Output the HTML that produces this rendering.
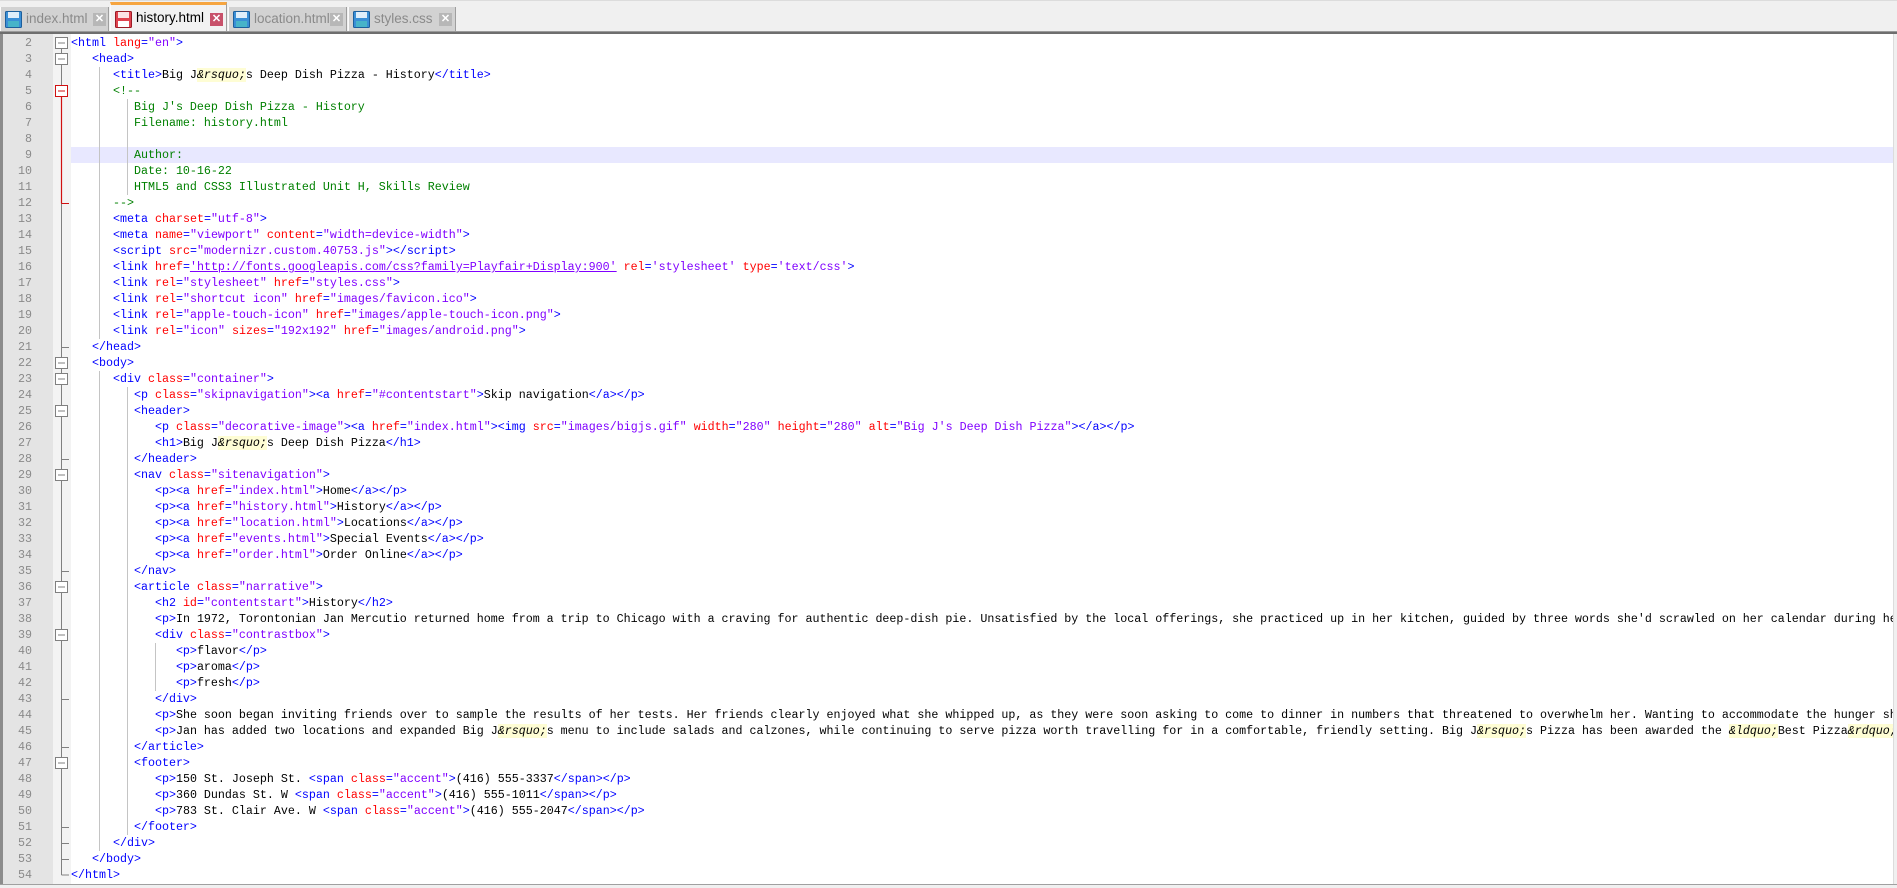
<!DOCTYPE html>
<html><head><meta charset="utf-8"><style>
*{margin:0;padding:0;box-sizing:border-box}
body{width:1897px;height:888px;overflow:hidden;background:#fff;position:relative;font-family:"Liberation Sans",sans-serif}
#bar{position:absolute;left:0;top:0;width:1897px;height:32px;background:#f0f0f0;border-top:1px solid #dcdcdc}
#barline{position:absolute;left:0;top:31px;width:1897px;height:3px;background:#6e6e6e;border-top:1px solid #9a9a9a}
.tab{position:absolute;top:7px;height:25px;background:#d2d2d2;border-right:1px solid #9e9e9e;border-left:1px solid #fafafa;font-size:13.5px;color:#8a8a8a;line-height:24px;white-space:nowrap}
.tab.act{top:2px;height:30px;background:#f2f2f2;border-top:3px solid #f6a540;color:#000;line-height:26px}
.tab svg{position:absolute;left:4px;top:4px}
.tab.act svg.f{top:6px}
.tab .nm{position:absolute;left:25px;top:0}
.tab .x{position:absolute;top:6px;width:13px;height:13px;background:#b7b7b7;color:#fff;font-size:11px;line-height:13px;text-align:center;font-weight:bold}
.tab.act .x{background:#c8516a;top:8px}
#gut{position:absolute;left:0;top:34px;width:53px;height:850px;background:#e4e4e4;border-left:3px solid #8c8c8c}
#fold{position:absolute;left:53px;top:34px;width:18px;height:850px;background:#f3f3f3}
#bot{position:absolute;left:0;top:884px;width:1897px;height:4px;background:#f0f0f0;border-top:1px solid #a0a0a0}
#nums{position:absolute;left:0;top:35px;width:32px;text-align:right;font-family:"Liberation Mono",monospace;font-size:11.67px;line-height:16px;color:#8a8a8a}
#code{position:absolute;left:71px;top:35px;width:1822px;font-family:"Liberation Mono",monospace;font-size:11.67px;line-height:16px;color:#000;overflow:hidden}
.l{height:16px;overflow:hidden;white-space:pre}
.hl{background:#e8e8ff}
.i{display:inline-block;height:16px;vertical-align:top;white-space:pre;background:repeating-linear-gradient(90deg,#c4c4c4 0 1px,transparent 1px 28px) no-repeat 28px 0}
.t{color:#0000ff}.a{color:#ff0000}.v{color:#8000ff}.c{color:#008000}
.e{font-style:italic;background:#fefdd4}
.u{text-decoration:underline}
#rb{position:absolute;left:1893px;top:34px;width:4px;height:850px;background:#f0f0f0;border-left:1px solid #dcdcdc}
</style></head><body>
<div id="bar"></div>
<div class="tab" style="left:0;width:109px"><svg class="f" width="17" height="17" viewBox="0 0 17 17"><rect x="0.5" y="0.5" width="16" height="16" rx="1" fill="#3a8fd6" stroke="#1d5f9c"/><rect x="3" y="1" width="11" height="6" fill="#dfeefa"/><rect x="3" y="10" width="11" height="6" fill="#47b3c9"/></svg><span class="nm">index.html</span><span class="x" style="left:92px">✕</span></div>
<div class="tab act" style="left:110px;width:117px"><svg class="f" width="17" height="17" viewBox="0 0 17 17"><rect x="0.5" y="0.5" width="16" height="16" rx="1" fill="#e0434f" stroke="#9b1c26"/><rect x="3" y="1" width="11" height="6" fill="#fbe3e5"/><rect x="3" y="10" width="11" height="6" fill="#fff"/></svg><span class="nm">history.html</span><span class="x" style="left:99px">✕</span></div>
<div class="tab" style="left:228px;width:119px"><svg class="f" width="17" height="17" viewBox="0 0 17 17"><rect x="0.5" y="0.5" width="16" height="16" rx="1" fill="#3a8fd6" stroke="#1d5f9c"/><rect x="3" y="1" width="11" height="6" fill="#dfeefa"/><rect x="3" y="10" width="11" height="6" fill="#47b3c9"/></svg><span class="nm">location.html</span><span class="x" style="left:101px">✕</span></div>
<div class="tab" style="left:348px;width:108px"><svg class="f" width="17" height="17" viewBox="0 0 17 17"><rect x="0.5" y="0.5" width="16" height="16" rx="1" fill="#3a8fd6" stroke="#1d5f9c"/><rect x="3" y="1" width="11" height="6" fill="#dfeefa"/><rect x="3" y="10" width="11" height="6" fill="#47b3c9"/></svg><span class="nm">styles.css</span><span class="x" style="left:90px">✕</span></div>
<div id="barline"></div>
<div id="gut"></div>
<div id="fold"></div>
<div id="rb"></div>
<div id="nums">2<br>3<br>4<br>5<br>6<br>7<br>8<br>9<br>10<br>11<br>12<br>13<br>14<br>15<br>16<br>17<br>18<br>19<br>20<br>21<br>22<br>23<br>24<br>25<br>26<br>27<br>28<br>29<br>30<br>31<br>32<br>33<br>34<br>35<br>36<br>37<br>38<br>39<br>40<br>41<br>42<br>43<br>44<br>45<br>46<br>47<br>48<br>49<br>50<br>51<br>52<br>53<br>54</div>
<svg style="position:absolute;left:52px;top:0" width="20" height="888">
<g stroke="#808080" stroke-width="1" fill="none">
<line x1="9.5" y1="43" x2="9.5" y2="875"/>
<line x1="9.5" y1="875" x2="17" y2="875"/>
<line x1="9.5" y1="347.5" x2="17" y2="347.5"/>
<line x1="9.5" y1="459.5" x2="17" y2="459.5"/>
<line x1="9.5" y1="571.5" x2="17" y2="571.5"/>
<line x1="9.5" y1="699.5" x2="17" y2="699.5"/>
<line x1="9.5" y1="747.5" x2="17" y2="747.5"/>
<line x1="9.5" y1="827.5" x2="17" y2="827.5"/>
<line x1="9.5" y1="843.5" x2="17" y2="843.5"/>
<line x1="9.5" y1="859.5" x2="17" y2="859.5"/>
</g>
<g stroke="#d01010" fill="none"><line x1="9.5" y1="91" x2="9.5" y2="203.5" stroke-width="1.2"/><line x1="9.5" y1="203.5" x2="17" y2="203.5"/></g>
<g fill="#fff" stroke="#808080">
<rect x="3.5" y="37.5" width="12" height="11"/><rect x="3.5" y="53.5" width="12" height="11"/>
<rect x="3.5" y="357.5" width="12" height="11"/><rect x="3.5" y="373.5" width="12" height="11"/>
<rect x="3.5" y="405.5" width="12" height="11"/><rect x="3.5" y="469.5" width="12" height="11"/>
<rect x="3.5" y="581.5" width="12" height="11"/><rect x="3.5" y="629.5" width="12" height="11"/>
<rect x="3.5" y="757.5" width="12" height="11"/>
</g>
<rect x="3.5" y="85.5" width="12" height="11" fill="#fff" stroke="#d01010"/>
<g stroke="#808080"><line x1="6" y1="43" x2="13" y2="43"/><line x1="6" y1="59" x2="13" y2="59"/><line x1="6" y1="363" x2="13" y2="363"/><line x1="6" y1="379" x2="13" y2="379"/><line x1="6" y1="411" x2="13" y2="411"/><line x1="6" y1="475" x2="13" y2="475"/><line x1="6" y1="587" x2="13" y2="587"/><line x1="6" y1="635" x2="13" y2="635"/><line x1="6" y1="763" x2="13" y2="763"/></g>
<line x1="6" y1="91" x2="13" y2="91" stroke="#d01010"/>
</svg>
<div id="code">
<div class="l"><span class="t">&lt;html </span><span class="a">lang</span><span class="t">=</span><span class="v">"en"</span><span class="t">&gt;</span></div>
<div class="l"><span class="i">   </span><span class="t">&lt;head&gt;</span></div>
<div class="l"><span class="i">      </span><span class="t">&lt;title&gt;</span>Big J<span class="e">&amp;rsquo;</span>s Deep Dish Pizza - History<span class="t">&lt;/title&gt;</span></div>
<div class="l"><span class="i">      </span><span class="c">&lt;!--</span></div>
<div class="l"><span class="i">         </span><span class="c">Big J's Deep Dish Pizza - History</span></div>
<div class="l"><span class="i">         </span><span class="c">Filename: history.html</span></div>
<div class="l"><span class="i">         </span></div>
<div class="l hl"><span class="i">         </span><span class="c">Author:</span></div>
<div class="l"><span class="i">         </span><span class="c">Date: 10-16-22</span></div>
<div class="l"><span class="i">         </span><span class="c">HTML5 and CSS3 Illustrated Unit H, Skills Review</span></div>
<div class="l"><span class="i">      </span><span class="c">--&gt;</span></div>
<div class="l"><span class="i">      </span><span class="t">&lt;meta </span><span class="a">charset</span><span class="t">=</span><span class="v">"utf-8"</span><span class="t">&gt;</span></div>
<div class="l"><span class="i">      </span><span class="t">&lt;meta </span><span class="a">name</span><span class="t">=</span><span class="v">"viewport"</span><span class="t"> </span><span class="a">content</span><span class="t">=</span><span class="v">"width=device-width"</span><span class="t">&gt;</span></div>
<div class="l"><span class="i">      </span><span class="t">&lt;script </span><span class="a">src</span><span class="t">=</span><span class="v">"modernizr.custom.40753.js"</span><span class="t">&gt;&lt;/script&gt;</span></div>
<div class="l"><span class="i">      </span><span class="t">&lt;link </span><span class="a">href</span><span class="t">=</span><span class="v u">'http://fonts.googleapis.com/css?family=Playfair+Display:900'</span><span class="t"> </span><span class="a">rel</span><span class="t">=</span><span class="v">'stylesheet'</span><span class="t"> </span><span class="a">type</span><span class="t">=</span><span class="v">'text/css'</span><span class="t">&gt;</span></div>
<div class="l"><span class="i">      </span><span class="t">&lt;link </span><span class="a">rel</span><span class="t">=</span><span class="v">"stylesheet"</span><span class="t"> </span><span class="a">href</span><span class="t">=</span><span class="v">"styles.css"</span><span class="t">&gt;</span></div>
<div class="l"><span class="i">      </span><span class="t">&lt;link </span><span class="a">rel</span><span class="t">=</span><span class="v">"shortcut icon"</span><span class="t"> </span><span class="a">href</span><span class="t">=</span><span class="v">"images/favicon.ico"</span><span class="t">&gt;</span></div>
<div class="l"><span class="i">      </span><span class="t">&lt;link </span><span class="a">rel</span><span class="t">=</span><span class="v">"apple-touch-icon"</span><span class="t"> </span><span class="a">href</span><span class="t">=</span><span class="v">"images/apple-touch-icon.png"</span><span class="t">&gt;</span></div>
<div class="l"><span class="i">      </span><span class="t">&lt;link </span><span class="a">rel</span><span class="t">=</span><span class="v">"icon"</span><span class="t"> </span><span class="a">sizes</span><span class="t">=</span><span class="v">"192x192"</span><span class="t"> </span><span class="a">href</span><span class="t">=</span><span class="v">"images/android.png"</span><span class="t">&gt;</span></div>
<div class="l"><span class="i">   </span><span class="t">&lt;/head&gt;</span></div>
<div class="l"><span class="i">   </span><span class="t">&lt;body&gt;</span></div>
<div class="l"><span class="i">      </span><span class="t">&lt;div </span><span class="a">class</span><span class="t">=</span><span class="v">"container"</span><span class="t">&gt;</span></div>
<div class="l"><span class="i">         </span><span class="t">&lt;p </span><span class="a">class</span><span class="t">=</span><span class="v">"skipnavigation"</span><span class="t">&gt;&lt;a </span><span class="a">href</span><span class="t">=</span><span class="v">"#contentstart"</span><span class="t">&gt;</span>Skip navigation<span class="t">&lt;/a&gt;&lt;/p&gt;</span></div>
<div class="l"><span class="i">         </span><span class="t">&lt;header&gt;</span></div>
<div class="l"><span class="i">            </span><span class="t">&lt;p </span><span class="a">class</span><span class="t">=</span><span class="v">"decorative-image"</span><span class="t">&gt;&lt;a </span><span class="a">href</span><span class="t">=</span><span class="v">"index.html"</span><span class="t">&gt;&lt;img </span><span class="a">src</span><span class="t">=</span><span class="v">"images/bigjs.gif"</span><span class="t"> </span><span class="a">width</span><span class="t">=</span><span class="v">"280"</span><span class="t"> </span><span class="a">height</span><span class="t">=</span><span class="v">"280"</span><span class="t"> </span><span class="a">alt</span><span class="t">=</span><span class="v">"Big J's Deep Dish Pizza"</span><span class="t">&gt;&lt;/a&gt;&lt;/p&gt;</span></div>
<div class="l"><span class="i">            </span><span class="t">&lt;h1&gt;</span>Big J<span class="e">&amp;rsquo;</span>s Deep Dish Pizza<span class="t">&lt;/h1&gt;</span></div>
<div class="l"><span class="i">         </span><span class="t">&lt;/header&gt;</span></div>
<div class="l"><span class="i">         </span><span class="t">&lt;nav </span><span class="a">class</span><span class="t">=</span><span class="v">"sitenavigation"</span><span class="t">&gt;</span></div>
<div class="l"><span class="i">            </span><span class="t">&lt;p&gt;&lt;a </span><span class="a">href</span><span class="t">=</span><span class="v">"index.html"</span><span class="t">&gt;</span>Home<span class="t">&lt;/a&gt;&lt;/p&gt;</span></div>
<div class="l"><span class="i">            </span><span class="t">&lt;p&gt;&lt;a </span><span class="a">href</span><span class="t">=</span><span class="v">"history.html"</span><span class="t">&gt;</span>History<span class="t">&lt;/a&gt;&lt;/p&gt;</span></div>
<div class="l"><span class="i">            </span><span class="t">&lt;p&gt;&lt;a </span><span class="a">href</span><span class="t">=</span><span class="v">"location.html"</span><span class="t">&gt;</span>Locations<span class="t">&lt;/a&gt;&lt;/p&gt;</span></div>
<div class="l"><span class="i">            </span><span class="t">&lt;p&gt;&lt;a </span><span class="a">href</span><span class="t">=</span><span class="v">"events.html"</span><span class="t">&gt;</span>Special Events<span class="t">&lt;/a&gt;&lt;/p&gt;</span></div>
<div class="l"><span class="i">            </span><span class="t">&lt;p&gt;&lt;a </span><span class="a">href</span><span class="t">=</span><span class="v">"order.html"</span><span class="t">&gt;</span>Order Online<span class="t">&lt;/a&gt;&lt;/p&gt;</span></div>
<div class="l"><span class="i">         </span><span class="t">&lt;/nav&gt;</span></div>
<div class="l"><span class="i">         </span><span class="t">&lt;article </span><span class="a">class</span><span class="t">=</span><span class="v">"narrative"</span><span class="t">&gt;</span></div>
<div class="l"><span class="i">            </span><span class="t">&lt;h2 </span><span class="a">id</span><span class="t">=</span><span class="v">"contentstart"</span><span class="t">&gt;</span>History<span class="t">&lt;/h2&gt;</span></div>
<div class="l"><span class="i">            </span><span class="t">&lt;p&gt;</span>In 1972, Torontonian Jan Mercutio returned home from a trip to Chicago with a craving for authentic deep-dish pie. Unsatisfied by the local offerings, she practiced up in her kitchen, guided by three words she'd scrawled on her calendar during her trip.</div>
<div class="l"><span class="i">            </span><span class="t">&lt;div </span><span class="a">class</span><span class="t">=</span><span class="v">"contrastbox"</span><span class="t">&gt;</span></div>
<div class="l"><span class="i">               </span><span class="t">&lt;p&gt;</span>flavor<span class="t">&lt;/p&gt;</span></div>
<div class="l"><span class="i">               </span><span class="t">&lt;p&gt;</span>aroma<span class="t">&lt;/p&gt;</span></div>
<div class="l"><span class="i">               </span><span class="t">&lt;p&gt;</span>fresh<span class="t">&lt;/p&gt;</span></div>
<div class="l"><span class="i">            </span><span class="t">&lt;/div&gt;</span></div>
<div class="l"><span class="i">            </span><span class="t">&lt;p&gt;</span>She soon began inviting friends over to sample the results of her tests. Her friends clearly enjoyed what she whipped up, as they were soon asking to come to dinner in numbers that threatened to overwhelm her. Wanting to accommodate the hunger she had created</div>
<div class="l"><span class="i">            </span><span class="t">&lt;p&gt;</span>Jan has added two locations and expanded Big J<span class="e">&amp;rsquo;</span>s menu to include salads and calzones, while continuing to serve pizza worth travelling for in a comfortable, friendly setting. Big J<span class="e">&amp;rsquo;</span>s Pizza has been awarded the <span class="e">&amp;ldquo;</span>Best Pizza<span class="e">&amp;rdquo;</span>, in</div>
<div class="l"><span class="i">         </span><span class="t">&lt;/article&gt;</span></div>
<div class="l"><span class="i">         </span><span class="t">&lt;footer&gt;</span></div>
<div class="l"><span class="i">            </span><span class="t">&lt;p&gt;</span>150 St. Joseph St. <span class="t">&lt;span </span><span class="a">class</span><span class="t">=</span><span class="v">"accent"</span><span class="t">&gt;</span>(416) 555-3337<span class="t">&lt;/span&gt;&lt;/p&gt;</span></div>
<div class="l"><span class="i">            </span><span class="t">&lt;p&gt;</span>360 Dundas St. W <span class="t">&lt;span </span><span class="a">class</span><span class="t">=</span><span class="v">"accent"</span><span class="t">&gt;</span>(416) 555-1011<span class="t">&lt;/span&gt;&lt;/p&gt;</span></div>
<div class="l"><span class="i">            </span><span class="t">&lt;p&gt;</span>783 St. Clair Ave. W <span class="t">&lt;span </span><span class="a">class</span><span class="t">=</span><span class="v">"accent"</span><span class="t">&gt;</span>(416) 555-2047<span class="t">&lt;/span&gt;&lt;/p&gt;</span></div>
<div class="l"><span class="i">         </span><span class="t">&lt;/footer&gt;</span></div>
<div class="l"><span class="i">      </span><span class="t">&lt;/div&gt;</span></div>
<div class="l"><span class="i">   </span><span class="t">&lt;/body&gt;</span></div>
<div class="l"><span class="t">&lt;/html&gt;</span></div>
</div>
<div id="bot"></div>
</body></html>
